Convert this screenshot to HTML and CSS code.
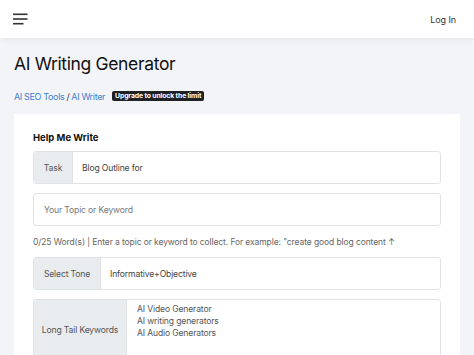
FILE: index.html
```html
<!DOCTYPE html>
<html>
<head>
<meta charset="utf-8">
<link rel="stylesheet" href="styles.css">
</head>
<body>
<header class="topbar">
  <svg class="menu" width="15" height="12" viewBox="0 0 15 12">
    <rect x="0" y="0.5" width="14.5" height="1.6" fill="#333"/>
    <rect x="0" y="5.2" width="14.5" height="1.6" fill="#333"/>
    <rect x="0" y="9.9" width="10.5" height="1.6" fill="#333"/>
  </svg>
  <span class="login">Log In</span>
</header>
<main class="page">
  <h1 class="title">AI Writing Generator</h1>
  <div class="crumbs">
    <a class="crumb">AI SEO Tools</a><span class="sep">/</span><a class="crumb">AI Writer</a>
    <span class="badge">Upgrade to unlock the limit</span>
  </div>
  <section class="card">
    <h2 class="card-title">Help Me Write</h2>
    <div class="group">
      <span class="addon addon-task">Task</span>
      <span class="field">Blog Outline for</span>
    </div>
    <div class="group">
      <span class="field placeholder">Your Topic or Keyword</span>
    </div>
    <p class="hint">0/25 Word(s) | Enter a topic or keyword to collect. For example: "create good blog content ↑</p>
    <div class="group">
      <span class="addon addon-tone">Select Tone</span>
      <span class="field">Informative+Objective</span>
    </div>
    <div class="group group-tall">
      <span class="addon addon-kw">Long Tail Keywords</span>
      <div class="field area">AI Video Generator<br>AI writing generators<br>AI Audio Generators</div>
    </div>
  </section>
</main>
</body>
</html>
```
FILE: styles.css
```css
* { box-sizing: border-box; }
html, body { margin: 0; padding: 0; }
body {
  background: #f3f4f8;
  font-family: Inter, "Noto Sans", sans-serif;
  color: #111;
  overflow: hidden;
  height: 355px;
}
.topbar {
  height: 38px;
  background: #fff;
  display: flex;
  align-items: center;
  justify-content: space-between;
  padding: 0 18px 0 13px;
  box-shadow: 0 2px 6px rgba(0,0,0,0.06);
  position: relative;
}
.menu { display: block; }
.login { font-size: 9px; color: #333; letter-spacing: -0.1px; }
.page { padding: 0 14px; }
.title {
  margin: 0;
  padding-top: 15px;
  font-size: 17.5px;
  font-weight: 400;
  line-height: 22px;
  letter-spacing: -0.35px;
}
.crumbs {
  margin-top: 14px;
  display: flex;
  align-items: center;
  font-size: 9px;
  letter-spacing: -0.35px;
  height: 14px;
}
.crumb { color: #3d7fd0; }
.sep { margin: 0 2px; color: #333; }
.badge {
  margin-left: 7px;
  background: #1f2124;
  color: #fff;
  font-size: 6.8px;
  font-weight: 700;
  letter-spacing: -0.1px;
  padding: 1px 3px;
  border-radius: 2px;
  line-height: 8.5px;
}
.card {
  margin-top: 11px;
  background: #fff;
  padding: 17px 19px 0 19px;
  height: 300px;
}
.card-title {
  margin: 0 0 6px;
  font-size: 9.5px;
  font-weight: 700;
  line-height: 14px;
}
.group {
  display: flex;
  height: 33px;
  border: 1px solid #dfe2e6;
  border-radius: 3px;
  margin-bottom: 9px;
  font-size: 8.6px;
  letter-spacing: -0.15px;
  color: #444;
  overflow: hidden;
}
.addon {
  background: #e9ecef;
  display: flex;
  align-items: center;
  justify-content: center;
  border-right: 1px solid #dfe2e6;
  color: #555;
}
.addon-task { width: 39px; }
.addon-tone { width: 67px; }
.addon-kw { width: 93px; }
.field {
  flex: 1;
  display: flex;
  align-items: center;
  padding-left: 9px;
}
.placeholder { color: #777; padding-left: 10px; }
.hint {
  margin: 10px 0 9px;
  font-size: 8.5px;
  letter-spacing: -0.1px;
  color: #666;
  line-height: 12px;
}
.group-tall { height: 61px; }
.area {
  display: block;
  padding-top: 3px;
  padding-left: 10px;
  line-height: 12px;
  color: #555;
}
```
